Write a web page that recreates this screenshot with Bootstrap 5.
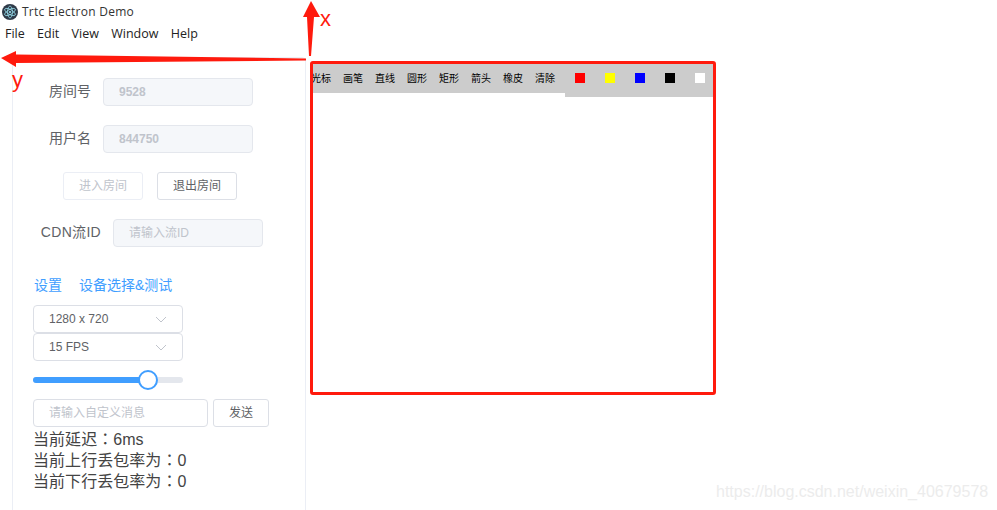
<!DOCTYPE html>
<html lang="zh">
<head>
<meta charset="utf-8">
<title>Trtc Electron Demo</title>
<link rel="stylesheet" href="https://cdn.jsdelivr.net/npm/bootstrap@5.3.0/dist/css/bootstrap.min.css">
<style>
html,body{height:510px;overflow:hidden;background:#fff}
body{font-family:"Open Sans","Noto Sans CJK SC",sans-serif;color:#606266;position:relative}
.titlebar{height:23px;padding-left:2px;font-size:12px;letter-spacing:.25px;color:#333;gap:4px}
.menubar{height:34px;padding:0 0 12px 5px;gap:12.3px;font-size:12.5px;color:#222;align-items:center}
.side-wrap{width:310px;padding-left:12px;flex:none}
.side-panel{width:294px;height:470px;border:1px solid #ebeef5;border-radius:4px;padding-top:20px;font-family:"Liberation Sans","Noto Sans CJK SC",sans-serif;font-size:14px}
.field-row{height:28px;margin-bottom:19px}
.field-label{text-align:right;flex:none;padding-bottom:2px}
.lbl-a{width:78px;margin-right:12px}
.lbl-b{width:88px;margin-right:12px;letter-spacing:.3px}
.el-input{width:150px;height:28px;border:1px solid #e4e7ed;border-radius:4px;background:#f5f7fa;color:#c0c4cc;font-size:12px;padding:0 15px;box-shadow:none;font-weight:700}
.el-input::placeholder{color:#c0c4cc;opacity:1}
.el-input:disabled{background:#f5f7fa}
.ph-normal{font-weight:400}
.btn-row{padding-left:50px;gap:14px;margin-bottom:19px}
.el-btn{width:80px;height:28px;padding:0;font-size:12px;line-height:26px;border:1px solid #dcdfe6;border-radius:3px;color:#606266;background:#fff}
.el-btn:disabled{color:#c0c4cc;border-color:#ebeef5;opacity:1;background:#fff}
.send-btn{width:56px}
.tabs-row{padding-left:21px;gap:17px;margin-top:28px;height:20px;font-size:14px;color:#409eff}
.tabs-row a{color:#409eff;text-decoration:none}
.controls{padding-left:20px;margin-top:10px}
.el-select{width:150px;height:28px;border:1px solid #dcdfe6;border-radius:4px;padding:0 15px;font-size:12px;color:#606266;background:#fff}
.slider-track{width:150px;height:6px;background:#e4e7ed;border-radius:3px;margin-top:16px}
.slider-fill{height:6px;background:#409eff;border-radius:3px 0 0 3px}
.slider-thumb{position:absolute;left:105px;top:-7px;width:20px;height:20px;border:2px solid #409eff;border-radius:50%;background:#fff}
.msg-row{margin-top:16px;gap:5px}
.msg-input{width:175px;height:28px;border:1px solid #dcdfe6;border-radius:4px;font-size:12px;padding:0 15px;box-shadow:none;color:#606266}
.msg-input::placeholder{color:#c0c4cc;opacity:1}
.stats{margin-top:2px;font-size:16px;line-height:21px;color:#444;font-family:"Liberation Sans","Noto Sans CJK TC",sans-serif;letter-spacing:.05px}
.board{width:406px;height:334px;margin-top:4px;border:3px solid #ff1a0d;border-radius:3px;background:#fff;flex:none;overflow:hidden}
.tools{width:252px;height:29px;background:#ccc;font-family:"Liberation Sans","Noto Sans CJK SC",sans-serif;font-size:10px;color:#000;gap:12px;white-space:nowrap;flex:none;overflow:hidden}
.tools span{width:20px;flex:none;text-align:left}
.tools span:first-child{margin-left:-2px}
.swatches{height:33px;flex:1;background:#ccc;gap:20px;padding-left:10px;padding-bottom:5px}
.swatch{width:10px;height:10px;flex:none}
.sw-r{background:#f00}.sw-y{background:#ff0}.sw-b{background:#00f}.sw-k{background:#000}.sw-w{background:#fff}
.overlay{position:absolute;left:0;top:0;pointer-events:none}
.axis{position:absolute;color:#ff1a0d;font-family:"Liberation Sans",sans-serif;font-size:22px;line-height:1}
.axis-x{left:320px;top:8px}
.axis-y{left:12px;top:69px}
.watermark{position:absolute;left:716px;top:482px;font-family:"Liberation Sans",sans-serif;font-size:16px;color:#ececec;line-height:20px}
</style>
</head>
<body>
<div class="titlebar d-flex align-items-center">
  <svg width="16" height="16" viewBox="0 0 16 16"><circle cx="8" cy="8" r="8" fill="#2f3a48"/><g fill="none" stroke="#9feaf9" stroke-width=".7"><ellipse cx="8" cy="8" rx="6" ry="2.4" transform="rotate(30 8 8)"/><ellipse cx="8" cy="8" rx="6" ry="2.4" transform="rotate(90 8 8)"/><ellipse cx="8" cy="8" rx="6" ry="2.4" transform="rotate(150 8 8)"/></g><circle cx="8" cy="8" r="1" fill="#9feaf9"/></svg>
  <span>Trtc Electron Demo</span>
</div>
<div class="menubar d-flex"><span>File</span><span>Edit</span><span>View</span><span>Window</span><span>Help</span></div>
<div class="d-flex align-items-start">
  <div class="side-wrap">
    <div class="side-panel">
      <div class="field-row d-flex align-items-center"><label class="field-label lbl-a">房间号</label><input class="form-control el-input" value="9528" disabled></div>
      <div class="field-row d-flex align-items-center"><label class="field-label lbl-a">用户名</label><input class="form-control el-input" value="844750" disabled></div>
      <div class="btn-row d-flex"><button class="btn el-btn" disabled>进入房间</button><button class="btn el-btn">退出房间</button></div>
      <div class="field-row d-flex align-items-center"><label class="field-label lbl-b">CDN流ID</label><input class="form-control el-input ph-normal" placeholder="请输入流ID" disabled></div>
      <div class="tabs-row d-flex align-items-center"><a href="#">设置</a><a href="#">设备选择&amp;测试</a></div>
      <div class="controls">
        <div class="el-select d-flex align-items-center justify-content-between"><span>1280 x 720</span><svg width="12" height="7" viewBox="0 0 12 7"><path d="M1 1l5 5 5-5" fill="none" stroke="#c0c4cc"/></svg></div>
        <div class="el-select d-flex align-items-center justify-content-between"><span>15 FPS</span><svg width="12" height="7" viewBox="0 0 12 7"><path d="M1 1l5 5 5-5" fill="none" stroke="#c0c4cc"/></svg></div>
        <div class="slider-track position-relative"><div class="slider-fill" style="width:77%"></div><div class="slider-thumb"></div></div>
        <div class="msg-row d-flex"><input class="form-control msg-input" placeholder="请输入自定义消息"><button class="btn el-btn send-btn">发送</button></div>
        <div class="stats" lang="zh-TW"><div>当前延迟：6ms</div><div>当前上行丢包率为：0</div><div>当前下行丢包率为：0</div></div>
      </div>
    </div>
  </div>
  <div class="board">
    <div class="d-flex align-items-start">
      <div class="tools d-flex align-items-center"><span>光标</span><span>画笔</span><span>直线</span><span>圆形</span><span>矩形</span><span>箭头</span><span>橡皮</span><span>清除</span></div>
      <div class="swatches d-flex align-items-center"><div class="swatch sw-r"></div><div class="swatch sw-y"></div><div class="swatch sw-b"></div><div class="swatch sw-k"></div><div class="swatch sw-w"></div></div>
    </div>
  </div>
</div>
<svg class="overlay" width="997" height="510" viewBox="0 0 997 510">
  <path d="M1 58L16 51L16 54.5L306 58.5L306 60.5L16 63L16 67Z" fill="#ff1a0d"/>
  <path d="M311 1L320 17L314 17L311 56L309 56L307 17L303 17Z" fill="#ff1a0d"/>
</svg>
<div class="axis axis-x">x</div>
<div class="axis axis-y">y</div>
<div class="watermark">https://blog.csdn.net/weixin_40679578</div>
<script src="https://cdn.jsdelivr.net/npm/bootstrap@5.3.0/dist/js/bootstrap.bundle.min.js"></script>
</body>
</html>
